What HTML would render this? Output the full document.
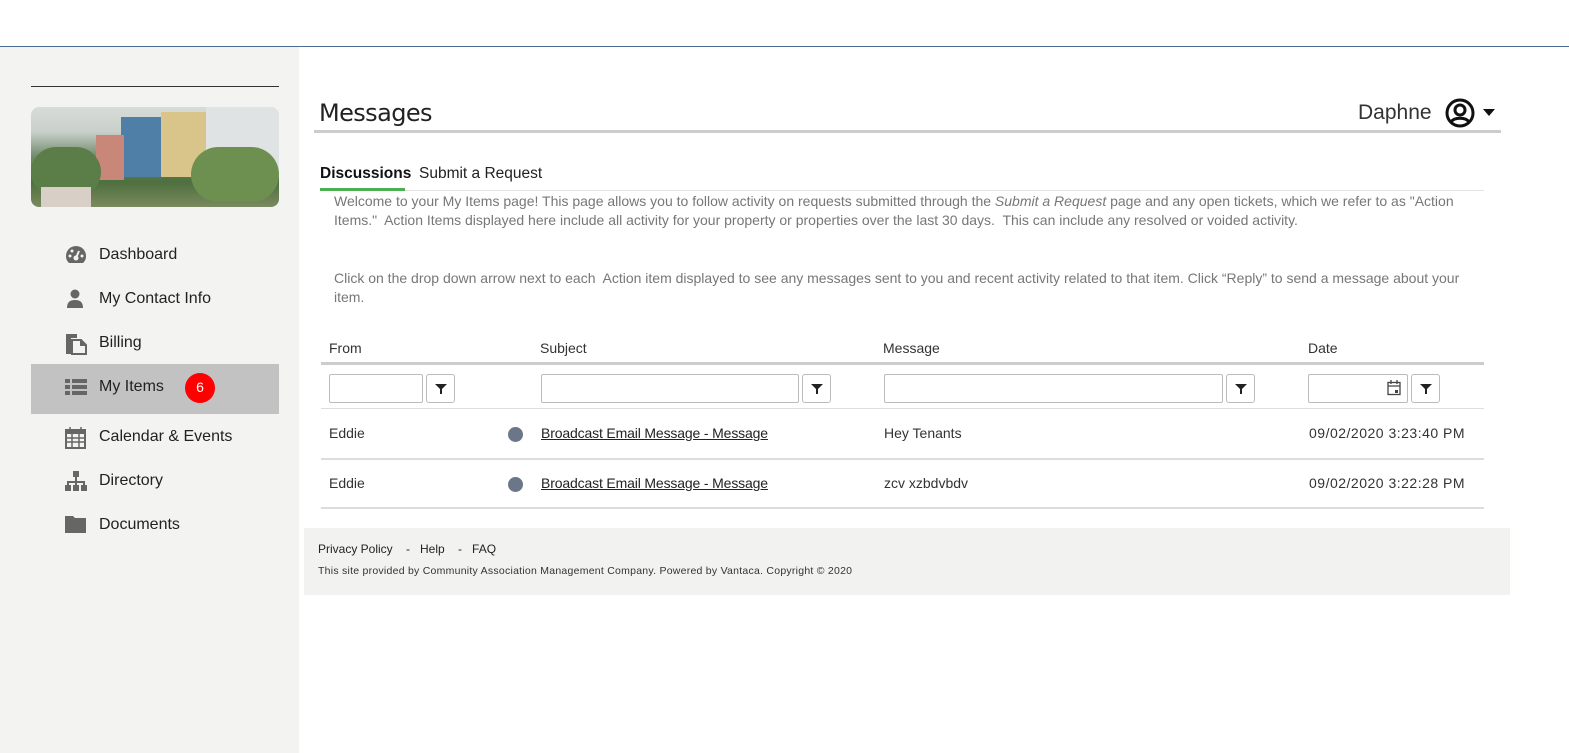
<!DOCTYPE html>
<html><head><style>
*{margin:0;padding:0;box-sizing:border-box}
body{width:1569px;height:753px;position:relative;background:#fff;font-family:"Liberation Sans",sans-serif;overflow:hidden}
.a{position:absolute}
.topline{left:0;top:46px;width:1569px;height:1px;background:#4a6b94}
.side{left:0;top:47px;width:299px;height:706px;background:#f3f4f2}
.nav{left:31px;width:248px;height:50px;font-size:16px;color:#222}
.nav span{position:absolute;left:68px;top:16px}
.nav svg{position:absolute;left:34px;top:15px}
.txt{font-size:14px;color:#777;line-height:19px}
.inp{height:29px;border:1px solid #bbb;background:#fff;border-radius:2px}
.fb{width:29px;height:29px;border:1px solid #bbb;border-radius:3px;background:#fff}
.fb:after{content:"";position:absolute;left:8px;top:9px;border-left:6px solid transparent;border-right:6px solid transparent;border-top:6px solid #222}
.fb:before{content:"";position:absolute;left:13px;top:13px;width:2px;height:6px;background:#222}
.hl{height:1px;background:#ddd;left:321px;width:1163px}
.cell{font-size:14px;color:#333}
.dot{width:15px;height:15px;border-radius:50%;background:#6b7689}
.lnk{font-size:14px;color:#222;text-decoration:underline}
</style></head><body>
<div class="a topline"></div>
<div class="a side"></div>
<div class="a" style="left:31px;top:86px;width:248px;height:1px;background:#333"></div>
<div class="a" style="left:31px;top:107px;width:248px;height:100px;border-radius:8px;overflow:hidden;background:linear-gradient(180deg,#d8dcd8 0%,#c9cfca 25%,#6f8a6a 50%,#4e6f3e 75%,#7a8a60 100%)">
 <div class="a" style="left:90px;top:10px;width:40px;height:60px;background:#4f7fa6"></div>
 <div class="a" style="left:65px;top:28px;width:28px;height:45px;background:#c9877a"></div>
 <div class="a" style="left:130px;top:5px;width:45px;height:65px;background:#d9c48a"></div>
 <div class="a" style="left:175px;top:0;width:73px;height:70px;background:#dfe3e3"></div>
 <div class="a" style="left:0;top:40px;width:70px;height:50px;background:#5b7d48;border-radius:30px"></div>
 <div class="a" style="left:160px;top:40px;width:88px;height:55px;background:#6d9050;border-radius:30px"></div>
 <div class="a" style="left:10px;top:80px;width:50px;height:20px;background:#d8cfc6"></div>
</div>

<div class="a nav" style="top:230px"><svg width="22" height="20" viewBox="0 0 22 20"><path d="M11 1A10 10 0 0 0 1 11c0 3 1 5 3 7h14c2-2 3-4 3-7A10 10 0 0 0 11 1z" fill="#666"/><circle cx="11" cy="13" r="2.5" fill="#f3f4f2"/><path d="M11 13L14 6" stroke="#f3f4f2" stroke-width="2"/><circle cx="5" cy="11" r="1.5" fill="#f3f4f2"/><circle cx="7" cy="6" r="1.5" fill="#f3f4f2"/><circle cx="17" cy="11" r="1.5" fill="#f3f4f2"/></svg><span>Dashboard</span></div>
<div class="a nav" style="top:274px"><svg width="20" height="20" viewBox="0 0 20 20"><circle cx="10" cy="5" r="4.5" fill="#666"/><path d="M2 19c0-6 3-8 8-8s8 2 8 8z" fill="#666"/></svg><span>My Contact Info</span></div>
<div class="a nav" style="top:318px"><svg width="22" height="22" viewBox="0 0 22 22"><path d="M1 1h11l0 4h-6v16H1z" fill="#666"/><path d="M7 7h9l5 5v9H7z" fill="none" stroke="#666" stroke-width="2"/><path d="M15 7v6h6" fill="#666"/></svg><span>Billing</span></div>
<div class="a nav" style="top:364px;background:#c2c2c2"><svg width="22" height="18" viewBox="0 0 22 18"><rect x="0" y="0" width="5" height="4" fill="#666"/><rect x="7" y="0" width="15" height="4" fill="#666"/><rect x="0" y="6" width="5" height="4" fill="#666"/><rect x="7" y="6" width="15" height="4" fill="#666"/><rect x="0" y="12" width="5" height="4" fill="#666"/><rect x="7" y="12" width="15" height="4" fill="#666"/></svg><span style="top:14px">My Items</span>
 <div class="a" style="left:154px;top:9px;width:30px;height:30px;border-radius:50%;background:#f00;color:#fff;font-size:14px;text-align:center;line-height:28px">6</div></div>
<div class="a nav" style="top:412px"><svg width="21" height="22" viewBox="0 0 21 22"><rect x="1" y="3" width="19" height="18" fill="none" stroke="#666" stroke-width="2"/><rect x="1" y="3" width="19" height="4" fill="#666"/><path d="M5 0v5M16 0v5M1 11h19M1 15h19M7 7v14M14 7v14" stroke="#666" stroke-width="1.5"/></svg><span>Calendar &amp; Events</span></div>
<div class="a nav" style="top:456px"><svg width="22" height="20" viewBox="0 0 22 20"><rect x="8" y="0" width="6" height="6" fill="#666"/><path d="M11 6v5M3 14v-3h16v3M11 11v3" stroke="#666" stroke-width="2" fill="none"/><rect x="0" y="14" width="6" height="6" fill="#666"/><rect x="8" y="14" width="6" height="6" fill="#666"/><rect x="16" y="14" width="6" height="6" fill="#666"/></svg><span>Directory</span></div>
<div class="a nav" style="top:500px"><svg width="22" height="18" viewBox="0 0 22 18"><path d="M0 1h8l2 2h11v15H0z" fill="#666"/></svg><span>Documents</span></div>

<div class="a" style="left:319px;top:99px;font-size:24px;color:#222;font-family:'DejaVu Sans',sans-serif;letter-spacing:-0.6px">Messages</div>
<div class="a" style="left:1358px;top:101px;font-size:21px;color:#333">Daphne</div>
<svg class="a" style="left:1445px;top:98px" width="30" height="30" viewBox="0 0 30 30"><circle cx="15" cy="15" r="13" fill="none" stroke="#111" stroke-width="3"/><circle cx="15" cy="12" r="5" fill="none" stroke="#111" stroke-width="3"/><path d="M6 24c3-5 15-5 18 0" fill="none" stroke="#111" stroke-width="3"/></svg>
<div class="a" style="left:1483px;top:109px;border-left:6px solid transparent;border-right:6px solid transparent;border-top:7px solid #111"></div>
<div class="a" style="left:314px;top:130px;width:1187px;height:3px;background:#ccc"></div>

<div class="a" style="left:320px;top:165px;font-size:15.5px;color:#111;font-weight:bold">Discussions</div>
<div class="a" style="left:320px;top:188px;width:85px;height:3px;background:#4caf50"></div>
<div class="a" style="left:419px;top:165px;font-size:15.5px;color:#222">Submit a Request</div>
<div class="a" style="left:405px;top:190px;width:1079px;height:1px;background:#e3e3e3"></div>

<div class="a txt" style="left:334px;top:192px;width:1140px">Welcome to your My Items page! This page allows you to follow activity on requests submitted through the <i>Submit a Request</i> page and any open tickets, which we refer to as "Action Items."&nbsp; Action Items displayed here include all activity for your property or properties over the last 30 days.&nbsp; This can include any resolved or voided activity.</div>
<div class="a txt" style="left:334px;top:269px;width:1140px">Click on the drop down arrow next to each&nbsp; Action item displayed to see any messages sent to you and recent activity related to that item. Click “Reply” to send a message about your item.</div>

<div class="a cell" style="left:329px;top:340px">From</div>
<div class="a cell" style="left:540px;top:340px">Subject</div>
<div class="a cell" style="left:883px;top:340px">Message</div>
<div class="a cell" style="left:1308px;top:340px">Date</div>
<div class="a" style="left:321px;top:362px;width:1163px;height:3px;background:#ccc"></div>

<div class="a inp" style="left:329px;top:374px;width:94px"></div><div class="a fb" style="left:426px;top:374px"></div>
<div class="a inp" style="left:541px;top:374px;width:258px"></div><div class="a fb" style="left:802px;top:374px"></div>
<div class="a inp" style="left:884px;top:374px;width:339px"></div><div class="a fb" style="left:1226px;top:374px"></div>
<div class="a inp" style="left:1308px;top:374px;width:100px"></div><div class="a fb" style="left:1411px;top:374px"></div>
<svg class="a" style="left:1387px;top:380px" width="14" height="16" viewBox="0 0 14 16"><rect x="1" y="2.5" width="12" height="12" fill="none" stroke="#444" stroke-width="1.3"/><path d="M1 6h12M4 0v4M10 0v4" stroke="#444" stroke-width="1.3"/><rect x="8" y="10" width="3" height="3" fill="#444"/></svg>
<div class="a hl" style="top:408px"></div>

<div class="a cell" style="left:329px;top:425px">Eddie</div>
<div class="a dot" style="left:508px;top:427px"></div>
<div class="a lnk" style="left:541px;top:425px;letter-spacing:-0.15px">Broadcast Email Message - Message</div>
<div class="a cell" style="left:884px;top:425px">Hey Tenants</div>
<div class="a cell" style="left:1309px;top:425px;letter-spacing:0.5px">09/02/2020 3:23:40 PM</div>
<div class="a hl" style="top:458px;height:2px"></div>

<div class="a cell" style="left:329px;top:475px">Eddie</div>
<div class="a dot" style="left:508px;top:477px"></div>
<div class="a lnk" style="left:541px;top:475px;letter-spacing:-0.15px">Broadcast Email Message - Message</div>
<div class="a cell" style="left:884px;top:475px">zcv xzbdvbdv</div>
<div class="a cell" style="left:1309px;top:475px;letter-spacing:0.5px">09/02/2020 3:22:28 PM</div>
<div class="a hl" style="top:507px;height:2px"></div>

<div class="a" style="left:304px;top:528px;width:1206px;height:67px;background:#f2f3f1"></div>
<div class="a" style="left:318px;top:542px;font-size:12px;color:#222">Privacy Policy &nbsp;&nbsp; - &nbsp;&nbsp;Help &nbsp;&nbsp; - &nbsp;&nbsp;FAQ</div>
<div class="a" style="left:318px;top:565px;font-size:10.5px;color:#333;letter-spacing:0.25px">This site provided by Community Association Management Company. Powered by Vantaca. Copyright © 2020</div>
</body></html>
